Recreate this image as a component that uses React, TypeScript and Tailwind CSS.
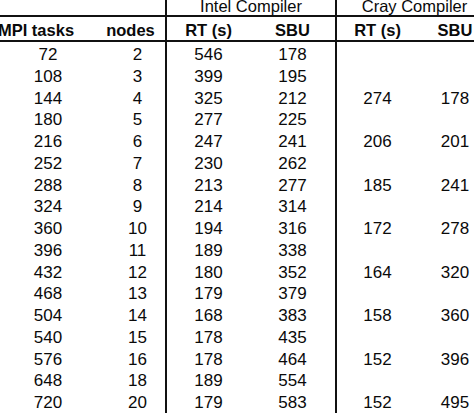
import React from "react";

const rows: (string | number)[][] = [
  [72, 2, 546, 178, "", ""],
  [108, 3, 399, 195, "", ""],
  [144, 4, 325, 212, 274, 178],
  [180, 5, 277, 225, "", ""],
  [216, 6, 247, 241, 206, 201],
  [252, 7, 230, 262, "", ""],
  [288, 8, 213, 277, 185, 241],
  [324, 9, 214, 314, "", ""],
  [360, 10, 194, 316, 172, 278],
  [396, 11, 189, 338, "", ""],
  [432, 12, 180, 352, 164, 320],
  [468, 13, 179, 379, "", ""],
  [504, 14, 168, 383, 158, 360],
  [540, 15, 178, 435, "", ""],
  [576, 16, 178, 464, 152, 396],
  [648, 18, 189, 554, "", ""],
  [720, 20, 179, 583, 152, 495],
];

const cols = "grid grid-cols-[96px_69px_85px_85px_83px_74px] w-[492px]";

export default function App() {
  return (
    <div
      className="w-[474px] h-[413px] overflow-hidden bg-white text-[#0a0a0a]"
      style={{ fontFamily: '"Liberation Sans", Arial, Helvetica, sans-serif' }}
    >
      <div className="w-[492px] -mt-[4px]">
        {/* group header */}
        <div className={`${cols} border-b-2 border-[#111] text-[16.5px] leading-[20px]`}>
          <div className="col-span-2 h-[19px]" />
          <div className="col-span-2 h-[19px] border-l-2 border-[#111] flex justify-center whitespace-nowrap">
            Intel Compiler
          </div>
          <div className="col-span-2 h-[19px] border-l-2 border-[#111] flex justify-center whitespace-nowrap">
            Cray Compiler
          </div>
        </div>
        {/* column header */}
        <div className={`${cols} border-b-2 border-[#111] text-[16.5px] leading-[20px] font-bold`}>
          <div className="h-[23px] pt-[3px] pr-[24px] flex justify-center whitespace-nowrap">MPI tasks</div>
          <div className="h-[23px] pt-[3px] flex justify-center whitespace-nowrap">nodes</div>
          <div className="h-[23px] pt-[3px] border-l-2 border-[#111] flex justify-center whitespace-nowrap">RT (s)</div>
          <div className="h-[23px] pt-[3px] flex justify-center whitespace-nowrap">SBU</div>
          <div className="h-[23px] pt-[3px] border-l-2 border-[#111] flex justify-center whitespace-nowrap">RT (s)</div>
          <div className="h-[23px] pt-[3px] flex justify-center whitespace-nowrap">SBU</div>
        </div>
        {/* body */}
        <div className={`${cols} text-[17px] leading-[21.75px]`}>
          <div className="h-[2px]" />
          <div className="h-[2px]" />
          <div className="h-[2px] border-l-2 border-[#111]" />
          <div className="h-[2px]" />
          <div className="h-[2px] border-l-2 border-[#111]" />
          <div className="h-[2px]" />
          {rows.map((r, i) => (
            <React.Fragment key={i}>
              <div className="h-[21.75px] text-center">{r[0]}</div>
              <div className="h-[21.75px] text-center pl-[14px]">{r[1]}</div>
              <div className="h-[21.75px] text-center border-l-2 border-[#111]">{r[2]}</div>
              <div className="h-[21.75px] text-center">{r[3]}</div>
              <div className="h-[21.75px] text-center border-l-2 border-[#111]">{r[4]}</div>
              <div className="h-[21.75px] text-center">{r[5]}</div>
            </React.Fragment>
          ))}
          <div className="h-[20px]" />
          <div className="h-[20px]" />
          <div className="h-[20px] border-l-2 border-[#111]" />
          <div className="h-[20px]" />
          <div className="h-[20px] border-l-2 border-[#111]" />
          <div className="h-[20px]" />
        </div>
      </div>
    </div>
  );
}
